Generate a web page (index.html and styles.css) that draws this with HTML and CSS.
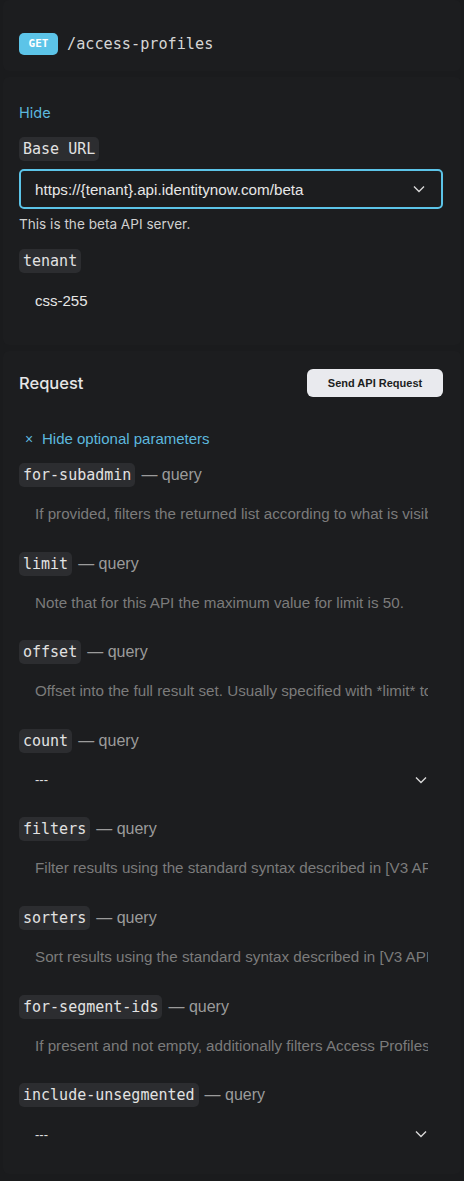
FILE: index.html
```html
<!DOCTYPE html>
<html>
<head>
<meta charset="utf-8">
<link rel="stylesheet" href="styles.css">
</head>
<body>
<div class="page">
  <section class="card head">
    <div class="endpoint">
      <span class="badge">GET</span>
      <span class="path">/access-profiles</span>
    </div>
  </section>

  <section class="card server">
    <a class="link hide">Hide</a>
    <div class="field">
      <code class="chip">Base URL</code>
      <div class="select focused">
        <span class="select-text">https://{tenant}.api.identitynow.com/beta</span>
        <svg class="chev" width="12" height="8" viewBox="0 0 12 8"><path d="M1 1.5 L6 6.5 L11 1.5" fill="none" stroke="#d8d8d8" stroke-width="1.4"/></svg>
      </div>
      <div class="help">This is the beta API server.</div>
    </div>
    <div class="field tenant">
      <code class="chip">tenant</code>
      <div class="input value"><span class="clip">css-255</span></div>
    </div>
  </section>

  <section class="card request">
    <div class="req-head">
      <h3 class="req-title">Request</h3>
      <button class="send">Send API Request</button>
    </div>
    <a class="link toggle"><span class="x">×</span>Hide optional parameters</a>

    <div class="param">
      <div class="plabel"><code class="chip">for-subadmin</code><span class="ptype">— query</span></div>
      <div class="input ph"><span class="clip">If provided, filters the returned list according to what is visible to the indicated ROLE_SUBADMIN Identity.</span></div>
    </div>
    <div class="param">
      <div class="plabel"><code class="chip">limit</code><span class="ptype">— query</span></div>
      <div class="input ph"><span class="clip">Note that for this API the maximum value for limit is 50.</span></div>
    </div>
    <div class="param">
      <div class="plabel"><code class="chip">offset</code><span class="ptype">— query</span></div>
      <div class="input ph"><span class="clip">Offset into the full result set. Usually specified with *limit* to paginate through the results.</span></div>
    </div>
    <div class="param">
      <div class="plabel"><code class="chip">count</code><span class="ptype">— query</span></div>
      <div class="select plain">
        <span class="dash">---</span>
        <svg class="chev" width="12" height="8" viewBox="0 0 12 8"><path d="M1 1.5 L6 6.5 L11 1.5" fill="none" stroke="#d8d8d8" stroke-width="1.4"/></svg>
      </div>
    </div>
    <div class="param">
      <div class="plabel"><code class="chip">filters</code><span class="ptype">— query</span></div>
      <div class="input ph"><span class="clip">Filter results using the standard syntax described in [V3 API Standard Collection Parameters]</span></div>
    </div>
    <div class="param">
      <div class="plabel"><code class="chip">sorters</code><span class="ptype">— query</span></div>
      <div class="input ph"><span class="clip">Sort results using the standard syntax described in [V3 API Standard Collection Parameters]</span></div>
    </div>
    <div class="param">
      <div class="plabel"><code class="chip">for-segment-ids</code><span class="ptype">— query</span></div>
      <div class="input ph"><span class="clip">If present and not empty, additionally filters Access Profiles to those which are assigned to the Segment(s)</span></div>
    </div>
    <div class="param last">
      <div class="plabel"><code class="chip">include-unsegmented</code><span class="ptype">— query</span></div>
      <div class="select plain">
        <span class="dash">---</span>
        <svg class="chev" width="12" height="8" viewBox="0 0 12 8"><path d="M1 1.5 L6 6.5 L11 1.5" fill="none" stroke="#d8d8d8" stroke-width="1.4"/></svg>
      </div>
    </div>
  </section>
</div>
</body>
</html>
```

FILE: styles.css
```css
html, body {
  margin: 0;
  padding: 0;
  background: #1a1b1d;
}
body {
  font-family: "Liberation Sans", Arial, sans-serif;
  color: #e3e3e3;
}
.page {
  width: 464px;
  box-sizing: border-box;
  padding: 0 3px;
}
.card {
  background: #1c1d1f;
  border-radius: 6px;
  padding: 0 18px 0 16px;
}
.head {
  padding-top: 33px;
  padding-bottom: 16px;
  margin-bottom: 6px;
}
.endpoint {
  display: flex;
  align-items: center;
  gap: 9px;
  height: 22px;
}
.badge {
  background: #5cc4e8;
  color: #ffffff;
  font-family: "DejaVu Sans Mono", monospace;
  font-weight: bold;
  font-size: 11px;
  height: 22px;
  line-height: 22px;
  width: 39px;
  text-align: center;
  border-radius: 5px;
}
.path {
  font-family: "DejaVu Sans Mono", monospace;
  font-size: 15.2px;
  color: #d6d6d6;
}
.server {
  padding-top: 26px;
  padding-bottom: 24px;
  margin-bottom: 6px;
}
.link {
  color: #5cb8de;
  font-family: Inter, "Noto Sans", sans-serif;
  font-size: 14.5px;
  display: block;
  line-height: 20px;
}
.hide {
  margin-bottom: 14px;
}
.chip {
  display: inline-block;
  font-family: "DejaVu Sans Mono", monospace;
  font-size: 15px;
  line-height: 24px;
  height: 24px;
  padding: 0 4px;
  background: #2c2d30;
  color: #e2e2e2;
  border-radius: 5px;
}
.field .chip {
  margin-bottom: 8px;
}
.select {
  display: flex;
  align-items: center;
  justify-content: space-between;
  box-sizing: border-box;
  height: 40px;
  border-radius: 5px;
}
.select.focused {
  border: 2px solid #5cc4e8;
  padding: 0 16px 0 14px;
  height: 40px;
}
.select-text {
  font-size: 15.2px;
  color: #e6e6e6;
}
.help {
  font-family: Inter, "Noto Sans", sans-serif;
  font-size: 13.6px;
  color: #d0d0d0;
  line-height: 16px;
  margin-top: 7px;
}
.tenant {
  margin-top: 17px;
}
.tenant .chip {
  margin-bottom: 0;
}
.input {
  box-sizing: border-box;
  height: 40px;
  line-height: 40px;
  padding: 0 15px 0 16px;
  font-size: 15px;
}
.clip {
  display: block;
  white-space: nowrap;
  overflow: hidden;
}
.value {
  color: #e6e6e6;
  margin-top: 8px;
}
.request {
  padding-top: 17px;
  padding-bottom: 20px;
}
.req-head {
  display: flex;
  justify-content: space-between;
  align-items: center;
  height: 30px;
}
.req-title {
  margin: 0;
  font-family: Inter, "Noto Sans", sans-serif;
  font-weight: 500;
  font-size: 16.5px;
  color: #e6e6e6;
}
.send {
  background: #e9eaee;
  color: #1c1e21;
  border: none;
  border-radius: 6px;
  font-family: "Liberation Sans", Arial, sans-serif;
  font-weight: bold;
  font-size: 11px;
  width: 136px;
  height: 28px;
  padding: 0;
}
.toggle {
  margin-top: 31px;
  margin-bottom: 14px;
  font-family: "Liberation Sans", Arial, sans-serif;
  font-size: 15px;
  padding-left: 6px;
}
.toggle .x {
  display: inline-block;
  width: 17px;
  font-size: 14px;
}
.param {
  margin-bottom: 17.6px;
}
.param.last {
  margin-bottom: 0;
}
.plabel {
  display: flex;
  align-items: center;
  gap: 6px;
  height: 24px;
  margin-bottom: 7px;
}
.ptype {
  font-size: 16px;
  color: #9b9b9b;
}
.ph {
  color: #7b7b7b;
  font-size: 15.2px;
}
.select.plain {
  padding: 0 16px 0 16px;
}
.dash {
  color: #e0e0e0;
  font-size: 13px;
}
```
